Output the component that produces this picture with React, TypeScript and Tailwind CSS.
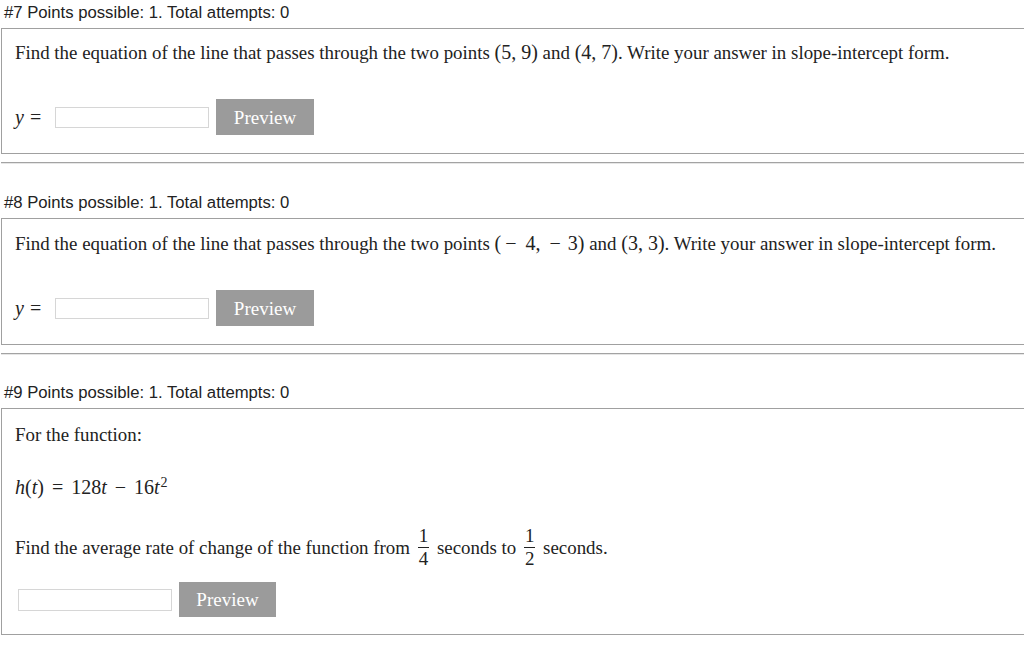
import React from "react";

const serif = { fontFamily: '"Liberation Serif", "Times New Roman", serif' };

function Header({ n }: { n: number }) {
  return (
    <div
      className="pl-[4px] h-[18px] leading-[18px] text-[16.7px] text-[#222]"
      style={{ fontFamily: '"Liberation Sans", Arial, sans-serif' }}
    >
      #{n} Points possible: 1. Total attempts: 0
    </div>
  );
}

function Hr() {
  return <div className="ml-[1px] h-[2px] border-t border-t-[#a3a3a3] border-b border-b-[#e6e6e6]" />;
}

function PreviewBtn({ w, h }: { w: string; h: string }) {
  return (
    <button className={`${w} ${h} bg-[#9b9b9b] text-white text-[19px] leading-none`} style={serif}>
      Preview
    </button>
  );
}

function Pt({ a, b }: { a: string; b: string }) {
  return (
    <span className="whitespace-nowrap text-[20px] leading-none">
      ({a},<span className="inline-block w-[5px]" />
      {b})
    </span>
  );
}

function YRow() {
  return (
    <div className="flex items-center h-[36px]">
      <span className="w-[40px] text-[20px] whitespace-nowrap">
        <i>y</i>
        <span className="ml-[6px]">=</span>
      </span>
      <div className="w-[154px] h-[21px] border border-[#d6d6d6] bg-white" />
      <div className="w-[7px]" />
      <PreviewBtn w="w-[98px]" h="h-[36px]" />
    </div>
  );
}

function Frac({ num, den }: { num: string; den: string }) {
  return (
    <span className="inline-flex flex-col items-center align-middle mx-[3px] text-[19px] leading-[18px]">
      <span className="px-[1px] pb-[2px]">{num}</span>
      <span className="block w-full border-t border-[#222]" />
      <span className="px-[1px] pt-[2px]">{den}</span>
    </span>
  );
}

export default function App() {
  return (
    <div className="w-[1024px] h-[645px] overflow-hidden bg-white text-[#222]" style={serif}>
      {/* #7 */}
      <div className="pt-[4px]">
        <Header n={7} />
        <div className="mt-[6px] ml-[1px] border-l border-t border-b border-[#a0a0a0] pl-[13px] pt-[13px] pb-[18px]">
          <p className="h-[22px] text-[18.9px] leading-[22px] whitespace-nowrap">
            Find the equation of the line that passes through the two points <Pt a="5" b="9" /> and{" "}
            <Pt a="4" b="7" />. Write your answer in slope-intercept form.
          </p>
          <div className="mt-[35px]">
            <YRow />
          </div>
        </div>
        <div className="mt-[8px]">
          <Hr />
        </div>
      </div>

      {/* #8 */}
      <div className="pt-[30px]">
        <Header n={8} />
        <div className="mt-[6px] ml-[1px] border-l border-t border-b border-[#a0a0a0] pl-[13px] pt-[14px] pb-[18px]">
          <p className="h-[22px] text-[18.9px] leading-[22px] whitespace-nowrap">
            Find the equation of the line that passes through the two points{" "}
            <span className="text-[20px] leading-none">
              (<span className="ml-[4px] mr-[9px]">−</span>4,
              <span className="ml-[9px] mr-[7px]">−</span>3)
            </span>{" "}
            and <Pt a="3" b="3" />. Write your answer in slope-intercept form.
          </p>
          <div className="mt-[35px]">
            <YRow />
          </div>
        </div>
        <div className="mt-[8px]">
          <Hr />
        </div>
      </div>

      {/* #9 */}
      <div className="pt-[29px]">
        <Header n={9} />
        <div className="mt-[6px] ml-[1px] border-l border-t border-b border-[#a0a0a0] pl-[13px] pt-[15px] pb-[17px]">
          <p className="h-[22px] text-[18.9px] leading-[22px]">For the function:</p>
          <p className="mt-[30px] h-[22px] text-[20px] leading-[22px] whitespace-nowrap">
            <i>h</i>(<i>t</i>)<span className="mx-[8px]">=</span>128<i>t</i>
            <span className="mx-[8px]">−</span>16<i>t</i>
            <sup className="text-[14px] ml-[1px]">2</sup>
          </p>
          <p className="mt-[29px] h-[41px] flex items-center text-[18.9px] leading-[22px] whitespace-pre">
            <span>Find the average rate of change of the function from </span>
            <Frac num="1" den="4" />
            <span> seconds to </span>
            <Frac num="1" den="2" />
            <span> seconds.</span>
          </p>
          <div className="mt-[14px] flex items-center ml-[3px]">
            <div className="w-[154px] h-[22px] border border-[#d6d6d6] bg-white" />
            <div className="w-[7px]" />
            <PreviewBtn w="w-[97px]" h="h-[35px]" />
          </div>
        </div>
      </div>
    </div>
  );
}
